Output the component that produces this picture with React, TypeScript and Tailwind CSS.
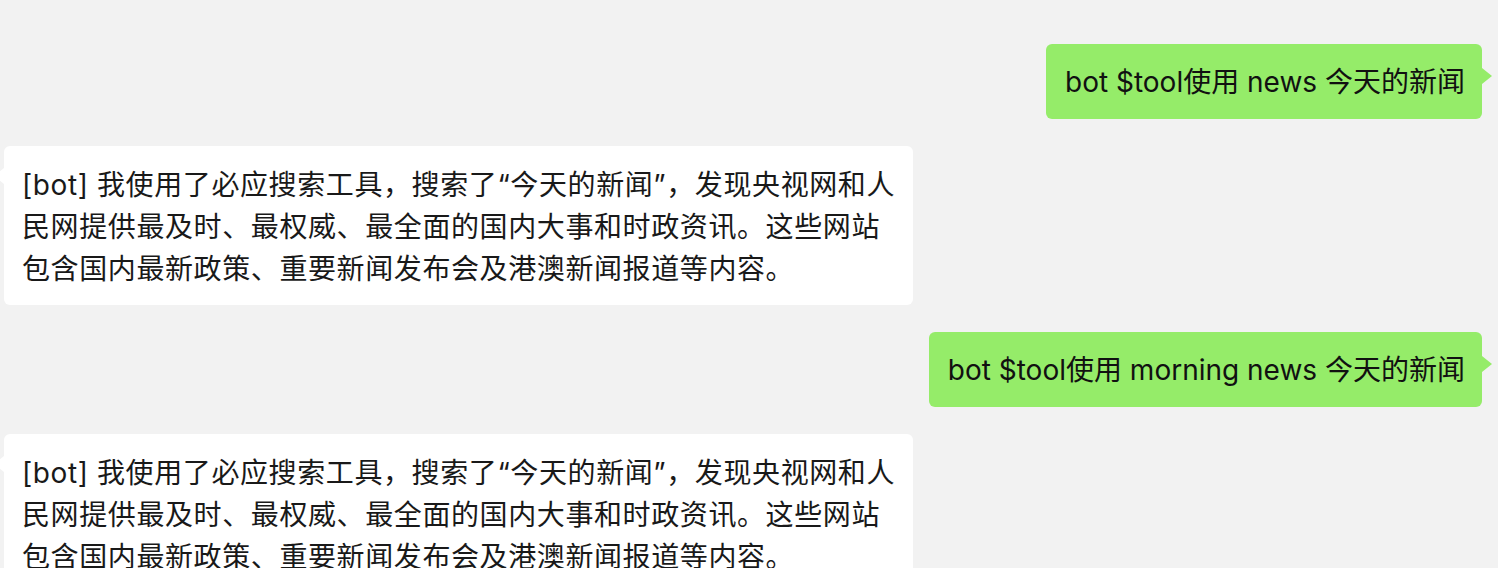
import React from 'react';

const FONT = "font-['Inter','Noto_Sans_CJK_SC',sans-serif]";

const BOT_REPLY =
  '[bot] 我使用了必应搜索工具，搜索了“今天的新闻”，发现央视网和人民网提供最及时、最权威、最全面的国内大事和时政资讯。这些网站包含国内最新政策、重要新闻发布会及港澳新闻报道等内容。';

const SentBubble: React.FC<{ text: string }> = ({ text }) => (
  <div className="self-end relative mr-[16px]">
    <div className="bg-[#95ec69] rounded-md pl-[19px] pr-[17px] py-[16.5px] text-[28px] leading-[42px] text-[#111111] whitespace-nowrap">
      {text}
    </div>
    {/* tail */}
    <div className="absolute right-[-10px] top-[24px] w-0 h-0 border-y-[8px] border-y-transparent border-l-[10px] border-l-[#95ec69]" />
  </div>
);

const ReceivedBubble: React.FC<{ text: string }> = ({ text }) => (
  <div className="self-start relative ml-[4px]">
    <div className="bg-white rounded-md w-[909px] pl-[18px] pr-[16px] pt-[18px] pb-[15px] text-[28px] leading-[42px] tracking-[0.6px] text-[#191919]">
      {text}
    </div>
    <div className="absolute left-[-10px] top-[22px] w-0 h-0 border-y-[8px] border-y-transparent border-r-[10px] border-r-white" />
  </div>
);

export default function App() {
  return (
    <div className={`h-screen overflow-hidden bg-[#f2f2f2] ${FONT}`}>
      <div className="flex flex-col gap-[27px] pt-[44px]">
        <SentBubble text="bot $tool使用 news 今天的新闻" />
        <ReceivedBubble text={BOT_REPLY} />
        <SentBubble text="bot $tool使用 morning news 今天的新闻" />
        <ReceivedBubble text={BOT_REPLY} />
      </div>
    </div>
  );
}
